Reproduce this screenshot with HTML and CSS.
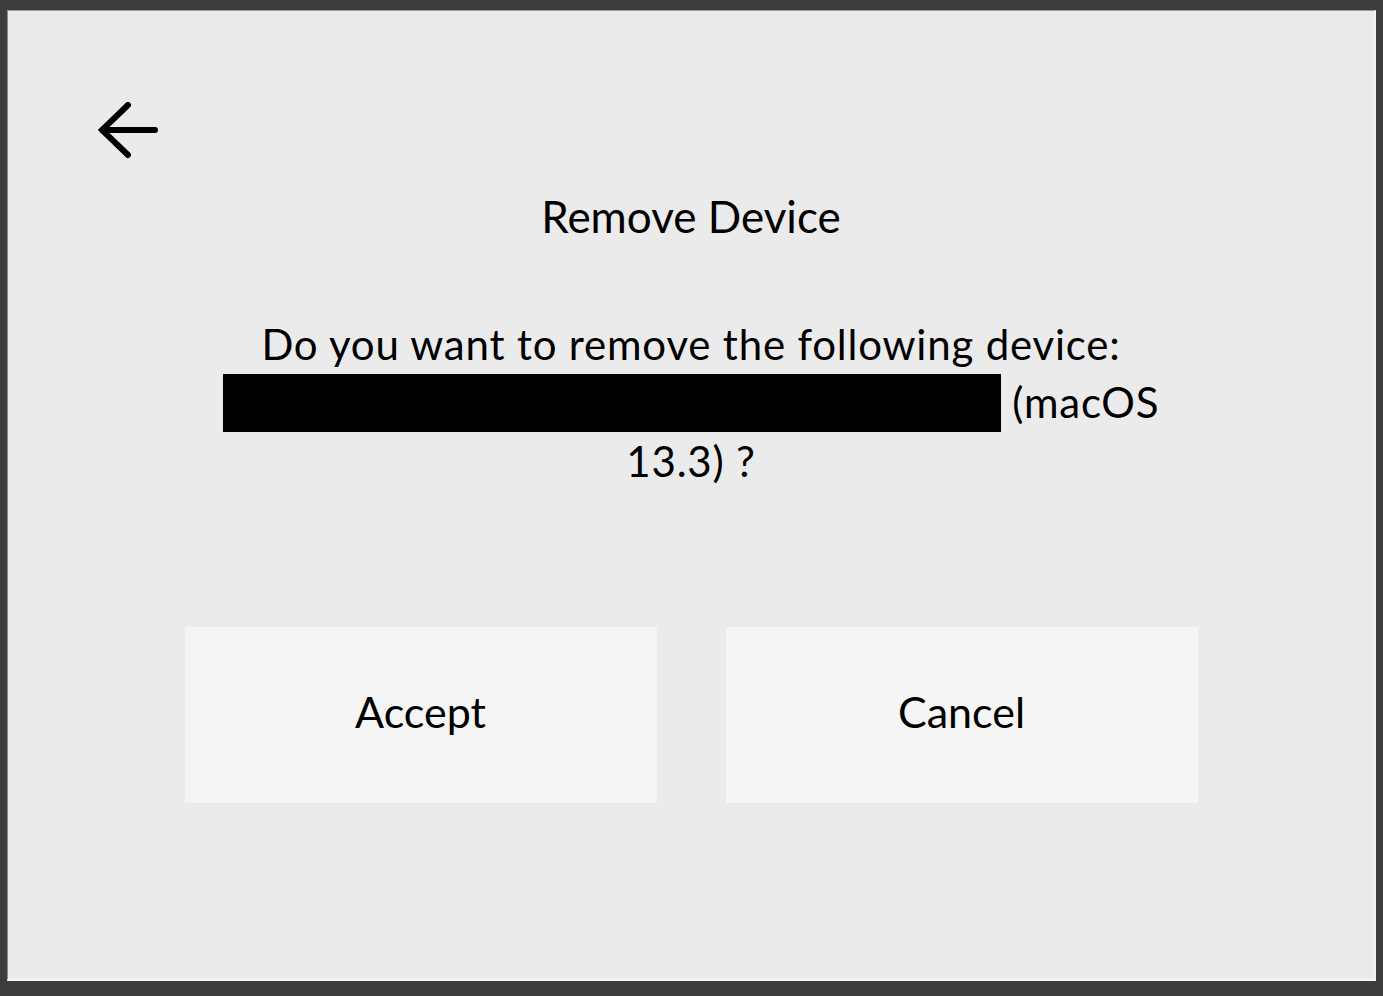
FILE: index.html
```html
<!DOCTYPE html>
<html lang="en">
<head>
<meta charset="utf-8">
<title>Remove Device</title>
<link rel="stylesheet" href="styles.css">
</head>
<body>
<div class="frame">
  <div class="dialog">
    <div class="toolbar">
      <button class="back" aria-label="Back">
        <svg width="62" height="58" viewBox="0 0 62 58" aria-hidden="true">
          <path d="M57 28 H4 M30 3 L4 28 L30 53" fill="none" stroke="#000" stroke-width="6" stroke-linecap="round" stroke-linejoin="miter"/>
        </svg>
      </button>
    </div>
    <h1 class="title">Remove Device</h1>
    <p class="message">Do you want to remove the following device: <span class="redacted"></span> (macOS 13.3) ?</p>
    <div class="actions">
      <button class="action">Accept</button>
      <button class="action">Cancel</button>
    </div>
  </div>
</div>
</body>
</html>
```

FILE: styles.css
```css
html, body {
  margin: 0;
  padding: 0;
  height: 100%;
}

body {
  background: #3d3d3d;
  font-family: "Lato", "Noto Sans", sans-serif;
  color: #000;
}

.frame {
  height: 100%;
  box-sizing: border-box;
  padding: 10px 7px 15px 7px;
  display: flex;
}

.dialog {
  flex: 1;
  background: #ebebeb;
  border-left: 1px solid #8c8c8c;
  border-top: 1px solid #9a9a9a;
  border-right: 2px solid #f3f3f3;
  border-bottom: 3px solid #f3f3f3;
  display: flex;
  flex-direction: column;
  align-items: center;
}

.toolbar {
  align-self: stretch;
  padding: 91px 0 0 90px;
  display: flex;
}

.back {
  background: none;
  border: 0;
  padding: 0;
  margin: 0;
  width: 62px;
  height: 58px;
  display: block;
  cursor: pointer;
}

.back svg {
  display: block;
}

.title {
  margin: 34px 0 0 0;
  font-size: 44px;
  line-height: 44px;
  font-weight: 400;
  text-align: center;
}

.message {
  margin: 77px 0 0 0;
  width: 960px;
  font-size: 42px;
  line-height: 58px;
  letter-spacing: 0.8px;
  text-align: center;
}

.redacted {
  display: inline-block;
  width: 778px;
  height: 58px;
  background: #000;
  vertical-align: -14px;
}

.actions {
  margin-top: 137px;
  display: flex;
  gap: 69px;
}

.action {
  width: 472px;
  height: 176px;
  background: #f5f5f5;
  border: 0;
  padding: 0 0 8px 0;
  margin: 0;
  font-family: "Lato", "Noto Sans", sans-serif;
  font-size: 43px;
  color: #000;
  cursor: pointer;
}
```
